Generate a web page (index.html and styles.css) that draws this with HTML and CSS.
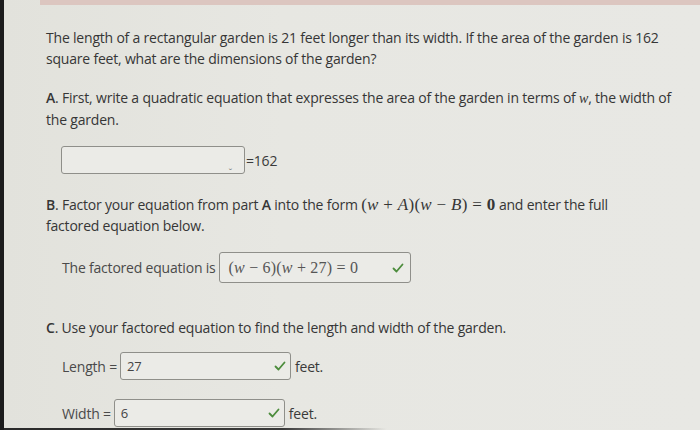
FILE: index.html
```html
<!DOCTYPE html>
<html>
<head>
<meta charset="utf-8">
<link rel="stylesheet" href="styles.css">
</head>
<body>
<div class="screen">
  <div class="topband"></div>
  <div class="content">
    <p class="para first">The length of a rectangular garden is 21 feet longer than its width. If the area of the garden is 162<br>square feet, what are the dimensions of the garden?</p>
    <p class="para"><span class="lbl">A</span>. First, write a quadratic equation that expresses the area of the garden in terms of <span class="mi">w</span>, the width of<br>the garden.</p>
    <div class="row row-a">
      <div class="box box-a"><span class="caret">ˬ</span></div>
      <span class="after tight">=162</span>
    </div>
    <p class="para para-b"><span class="lbl">B</span>. Factor your equation from part <b>A</b> into the form <span class="math">(<span class="mi">w</span> + <span class="mi">A</span>)(<span class="mi">w</span> − <span class="mi">B</span>) = <b>0</b></span> and enter the full<br>factored equation below.</p>
    <div class="row row-f">
      <span class="label">The factored equation is</span>
      <div class="box box-f">
        <span class="math eq">(<span class="mi">w</span> − 6)(<span class="mi">w</span> + 27) = 0</span>
        <svg class="check" viewBox="0 0 12 10" width="12" height="10"><polyline points="1.5,5.5 4.5,8.5 10.5,1.5" fill="none" stroke="#4c8c3c" stroke-width="1.8" stroke-linecap="round" stroke-linejoin="round"/></svg>
      </div>
    </div>
    <p class="para para-c"><span class="lbl">C</span>. Use your factored equation to find the length and width of the garden.</p>
    <div class="row row-l">
      <span class="label">Length =</span>
      <div class="box box-n">
        <span class="val">27</span>
        <svg class="check" viewBox="0 0 12 10" width="12" height="10"><polyline points="1.5,5.5 4.5,8.5 10.5,1.5" fill="none" stroke="#4c8c3c" stroke-width="1.8" stroke-linecap="round" stroke-linejoin="round"/></svg>
      </div>
      <span class="after">feet.</span>
    </div>
    <div class="row row-w">
      <span class="label">Width =</span>
      <div class="box box-n">
        <span class="val">6</span>
        <svg class="check" viewBox="0 0 12 10" width="12" height="10"><polyline points="1.5,5.5 4.5,8.5 10.5,1.5" fill="none" stroke="#4c8c3c" stroke-width="1.8" stroke-linecap="round" stroke-linejoin="round"/></svg>
      </div>
      <span class="after">feet.</span>
    </div>
  </div>
</div>
</body>
</html>
```
FILE: styles.css
```css
html, body {
  margin: 0;
  padding: 0;
  background: #e5e5e0;
}
body {
  font-family: "Open Sans", "Liberation Sans", sans-serif;
  font-size: 14px;
  letter-spacing: -0.2px;
  line-height: 21px;
  color: #363636;
}
.screen {
  border-left: 4px solid #1c1c1c;
  height: 430px;
  box-sizing: border-box;
  overflow: hidden;
  background:
    linear-gradient(90deg, #2a2a2a 0%, #3a3a3a 40%, rgba(60,60,60,0) 55%) left bottom / 100% 2px no-repeat,
    linear-gradient(90deg, #e2e2dc 0%, #e7e7e2 40%, #e8e8e4 100%);
}
.topband {
  height: 5px;
  margin-left: 36px;
  background: #dcc6c0;
}
.content {
  padding: 22px 20px 0 42px;
}
.para {
  margin: 0 0 18px 0;
  white-space: nowrap;
}
.para b, .lbl {
  font-weight: 600;
}
.mi {
  font-family: "Liberation Serif", serif;
  font-style: italic;
}
.math {
  font-family: "Liberation Serif", serif;
  font-size: 17px;
  letter-spacing: 0.3px;
}
.math b {
  font-weight: 700;
}
.row {
  display: flex;
  align-items: center;
  margin-left: 15px;
}
.row-a {
  margin-top: -2px;
}
.box {
  box-sizing: border-box;
  border: 1px solid #8f8f8a;
  border-radius: 3px;
  background: #ebebe7;
  display: flex;
  align-items: center;
}
.box-a {
  width: 184px;
  height: 28px;
  justify-content: flex-end;
  padding-right: 12px;
}
.caret {
  font-size: 10px;
  color: #777;
  line-height: 10px;
  margin-top: 8px;
}
.after {
  margin-left: 4px;
  color: #3a3a3a;
}
.after.tight {
  margin-left: 1px;
}
.para-b {
  margin-top: 20px;
  margin-bottom: 0;
}
.row-f {
  margin-top: 16px;
  margin-left: 16px;
}
.label {
  color: #4a4a4a;
  margin-right: 3px;
}
.box-f {
  width: 192px;
  height: 31px;
  padding: 0 6px 0 9px;
  justify-content: space-between;
}
.eq {
  color: #555;
  font-size: 16px;
  letter-spacing: 0.2px;
}
.para-c {
  margin-top: 34px;
  margin-bottom: 0;
}
.row-l {
  margin-top: 14px;
  margin-left: 16px;
}
.row-w {
  margin-top: 19px;
  margin-left: 16px;
}
.box-n {
  width: 171px;
  height: 28px;
  padding: 0 4px 0 6px;
  justify-content: space-between;
}
.val {
  font-size: 13px;
  color: #444;
}
.check {
  display: block;
}
```
